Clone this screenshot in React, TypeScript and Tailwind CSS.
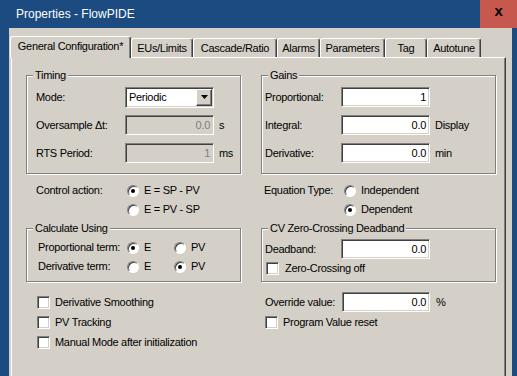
import type { ReactNode } from "react"

const sunken =
  "border border-t-[#808080] border-l-[#808080] border-b-white border-r-white shadow-[inset_1px_1px_0_#404040,inset_-1px_-1px_0_#d4d0c8]"

const Group = (props: { title: string; className: string; children: ReactNode }) => {
  return (
    <div className={`relative border border-[#808080] shadow-[inset_1px_1px_0_#fff,1px_1px_0_#fff] ${props.className}`}>
      <span className="absolute -top-[7px] left-[6px] bg-[#d4d0c8] px-[2px] leading-[13px]">{props.title}</span>
      {props.children}
    </div>
  )
}

const Field = (props: { value: string; disabled?: boolean; w?: string }) => {
  return (
    <div
      className={`${sunken} ${props.w ?? "w-[89px]"} h-[20px] flex items-center justify-end pr-[3px] ${
        props.disabled ? "bg-[#d4d0c8] text-[#808080]" : "bg-white"
      }`}
    >
      {props.value}
    </div>
  )
}

const Radio = (props: { checked?: boolean; label: string }) => {
  return (
    <div className="flex items-center gap-[5px]">
      <span className="w-[12px] h-[12px] shrink-0 rounded-full border border-t-[#808080] border-l-[#808080] border-r-white border-b-white bg-white shadow-[inset_1px_1px_0_#404040] flex items-center justify-center">
        {props.checked && <span className="w-[4px] h-[4px] rounded-full bg-black" />}
      </span>
      <span>{props.label}</span>
    </div>
  )
}

const Check = (props: { label: string }) => {
  return (
    <div className="h-[20px] flex items-center gap-[5px]">
      <span className={`${sunken} w-[13px] h-[13px] shrink-0 bg-white`} />
      <span>{props.label}</span>
    </div>
  )
}

const tabs = [
  { name: "EUs/Limits", w: "w-[62px]" },
  { name: "Cascade/Ratio", w: "w-[84px]" },
  { name: "Alarms", w: "w-[43px]" },
  { name: "Parameters", w: "w-[65px]" },
  { name: "Tag", w: "w-[42px]" },
  { name: "Autotune", w: "w-[54px]" },
]

const tabBase =
  "border-t border-l border-r border-t-white border-l-white border-r-[#404040] shadow-[inset_-1px_0_0_#808080] rounded-t-[3px] flex items-center justify-center bg-[#d4d0c8]"

export default function App() {
  return (
    <div className="w-[517px] h-[376px] overflow-hidden bg-[#1b4b80] flex flex-col text-[11px] leading-[13px] tracking-[-0.3px] text-black font-['Liberation_Sans',Arial,sans-serif]">
      {/* title bar */}
      <div className="h-[28px] shrink-0 flex">
        <span className="flex-1 pl-[16px] pt-[7px] text-white text-[12px] leading-[14px] tracking-normal">Properties - FlowPIDE</span>
        <div className="w-[37px] h-[28px] bg-[#c6584e] flex justify-center pt-[3px] text-[15px] font-bold leading-[16px]">
          x
        </div>
      </div>

      {/* body */}
      <div className="ml-[9px] w-[503px] flex-1 bg-[#d4d0c8] pt-[8px] overflow-hidden">
        <div className="flex items-end h-[21px] ml-[1px]">
          <div className={`${tabBase} relative z-10 w-[121px] h-[22px] -mb-[1px] pb-[2px]`}>General Configuration*</div>
          {tabs.map((t) => (
            <div key={t.name} className={`${tabBase} ${t.w} h-[19px]`}>
              {t.name}
            </div>
          ))}
        </div>

        <div className="ml-[2px] w-[495px] h-[400px] border-t border-l border-r border-t-white border-l-white border-r-[#404040] shadow-[inset_-1px_0_0_#808080] pl-[14px]">
          {/* timing / gains */}
          <div className="mt-[17px] grid grid-cols-[215px_235px] gap-x-[20px]">
            <Group title="Timing" className="h-[99px] pt-[11px] pl-[9px]">
              <div className="flex flex-col gap-[8px]">
                <div className="h-[20px] flex items-center">
                  <span className="w-[89px]">Mode:</span>
                  <div className={`${sunken} w-[89px] h-[21px] bg-white flex items-center`}>
                    <span className="flex-1 pl-[3px]">Periodic</span>
                    <div className="w-[16px] h-[17px] mr-[1px] border border-t-white border-l-white border-r-[#404040] border-b-[#404040] shadow-[inset_-1px_-1px_0_#808080] bg-[#d4d0c8] flex items-center justify-center">
                      <svg width="7" height="4" viewBox="0 0 7 4">
                        <path d="M0 0h7L3.5 4z" fill="#000" />
                      </svg>
                    </div>
                  </div>
                </div>
                <div className="h-[20px] flex items-center">
                  <span className="w-[89px]">Oversample Δt:</span>
                  <Field value="0.0" disabled />
                  <span className="ml-[5px]">s</span>
                </div>
                <div className="h-[20px] flex items-center">
                  <span className="w-[89px]">RTS Period:</span>
                  <Field value="1" disabled />
                  <span className="ml-[5px]">ms</span>
                </div>
              </div>
            </Group>

            <Group title="Gains" className="h-[99px] pt-[11px] pl-[3px]">
              <div className="flex flex-col gap-[8px]">
                <div className="h-[20px] flex items-center">
                  <span className="w-[76px]">Proportional:</span>
                  <Field value="1" />
                </div>
                <div className="h-[20px] flex items-center">
                  <span className="w-[76px]">Integral:</span>
                  <Field value="0.0" />
                  <span className="ml-[5px]">Display</span>
                </div>
                <div className="h-[20px] flex items-center">
                  <span className="w-[76px]">Derivative:</span>
                  <Field value="0.0" />
                  <span className="ml-[5px]">min</span>
                </div>
              </div>
            </Group>
          </div>

          {/* control action / equation type */}
          <div className="mt-[7px] grid grid-cols-[215px_235px] gap-x-[20px]">
            <div className="flex pl-[10px]">
              <span className="w-[91px] h-[19px] flex items-center">Control action:</span>
              <div className="flex flex-col">
                <div className="h-[19px] flex items-center">
                  <Radio checked label="E = SP - PV" />
                </div>
                <div className="h-[19px] flex items-center">
                  <Radio label="E = PV - SP" />
                </div>
              </div>
            </div>
            <div className="flex pl-[3px]">
              <span className="w-[80px] h-[19px] flex items-center">Equation Type:</span>
              <div className="flex flex-col">
                <div className="h-[19px] flex items-center">
                  <Radio label="Independent" />
                </div>
                <div className="h-[19px] flex items-center">
                  <Radio checked label="Dependent" />
                </div>
              </div>
            </div>
          </div>

          {/* calculate using / deadband */}
          <div className="mt-[9px] grid grid-cols-[215px_235px] gap-x-[20px]">
            <Group title="Calculate Using" className="h-[54px] pt-[9px] pl-[11px]">
              <div className="h-[19px] flex items-center">
                <span className="w-[89px]">Proportional term:</span>
                <div className="w-[47px]">
                  <Radio checked label="E" />
                </div>
                <Radio label="PV" />
              </div>
              <div className="h-[19px] flex items-center">
                <span className="w-[89px]">Derivative term:</span>
                <div className="w-[47px]">
                  <Radio label="E" />
                </div>
                <Radio checked label="PV" />
              </div>
            </Group>

            <Group title="CV Zero-Crossing Deadband" className="h-[54px] pt-[10px] pl-[3px]">
              <div className="h-[20px] flex items-center">
                <span className="w-[76px]">Deadband:</span>
                <Field value="0.0" />
              </div>
              <div className="h-[19px] flex items-center pl-[1px]">
                <div className="flex items-center gap-[6px]">
                  <span className={`${sunken} w-[13px] h-[13px] bg-white`} />
                  <span>Zero-Crossing off</span>
                </div>
              </div>
            </Group>
          </div>

          {/* options */}
          <div className="mt-[10px] grid grid-cols-[215px_235px] gap-x-[20px]">
            <div className="flex flex-col pl-[11px]">
              <Check label="Derivative Smoothing" />
              <Check label="PV Tracking" />
              <Check label="Manual Mode after initialization" />
            </div>
            <div className="flex flex-col pl-[4px]">
              <div className="h-[20px] flex items-center">
                <span className="w-[77px]">Override value:</span>
                <Field value="0.0" w="w-[88px]" />
                <span className="ml-[6px]">%</span>
              </div>
              <Check label="Program Value reset" />
            </div>
          </div>
        </div>
      </div>
    </div>
  )
}
